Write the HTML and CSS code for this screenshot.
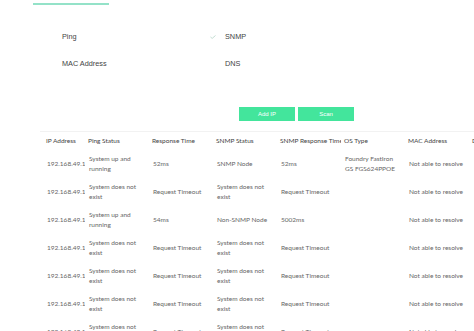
FILE: index.html
```html
<!DOCTYPE html>
<html lang="en">
<head>
  <meta charset="UTF-8">
  <meta name="viewport" content="width=device-width, initial-scale=1.0">
  <title>Network Scan</title>
  <link rel="stylesheet" href="styles.css">
</head>
<body>
  <div class="page">
    <div class="tab-line"></div>

    <!-- Scan Options -->
    <div class="options">
      <div class="option">Ping</div>
      <div class="option"><span class="check">
        <svg width="6" height="4" viewBox="0 0 6 4"><path d="M0.5 2 L2.2 3.4 L5.5 0.5" fill="none" stroke="#bcd9cd" stroke-width="0.9"/></svg>
      </span>SNMP</div>
      <div class="option">MAC Address</div>
      <div class="option"><span class="check"></span>DNS</div>
    </div>

    <!-- Actions -->
    <div class="actions">
      <button class="btn">Add IP</button>
      <button class="btn">Scan</button>
    </div>

    <!-- Results -->
    <div class="results">
      <div class="row head">
        <div class="cell">IP Address</div>
        <div class="cell">Ping Status</div>
        <div class="cell">Response Time</div>
        <div class="cell">SNMP Status</div>
        <div class="cell">SNMP Response Time</div>
        <div class="cell">OS Type</div>
        <div class="cell">MAC Address</div>
        <div class="cell">DNS Name</div>
      </div>
      <div class="row">
        <div class="cell ip">192.168.49.101</div>
        <div class="cell">System up and running</div>
        <div class="cell">52ms</div>
        <div class="cell">SNMP Node</div>
        <div class="cell">52ms</div>
        <div class="cell">Foundry FastIron GS FGS624PPOE</div>
        <div class="cell">Not able to resolve</div>
        <div class="cell"></div>
      </div>
      <div class="row">
        <div class="cell ip">192.168.49.102</div>
        <div class="cell">System does not exist</div>
        <div class="cell">Request Timeout</div>
        <div class="cell">System does not exist</div>
        <div class="cell">Request Timeout</div>
        <div class="cell"></div>
        <div class="cell">Not able to resolve</div>
        <div class="cell"></div>
      </div>
      <div class="row">
        <div class="cell ip">192.168.49.103</div>
        <div class="cell">System up and running</div>
        <div class="cell">54ms</div>
        <div class="cell">Non-SNMP Node</div>
        <div class="cell">5002ms</div>
        <div class="cell"></div>
        <div class="cell">Not able to resolve</div>
        <div class="cell"></div>
      </div>
      <div class="row">
        <div class="cell ip">192.168.49.104</div>
        <div class="cell">System does not exist</div>
        <div class="cell">Request Timeout</div>
        <div class="cell">System does not exist</div>
        <div class="cell">Request Timeout</div>
        <div class="cell"></div>
        <div class="cell">Not able to resolve</div>
        <div class="cell"></div>
      </div>
      <div class="row">
        <div class="cell ip">192.168.49.105</div>
        <div class="cell">System does not exist</div>
        <div class="cell">Request Timeout</div>
        <div class="cell">System does not exist</div>
        <div class="cell">Request Timeout</div>
        <div class="cell"></div>
        <div class="cell">Not able to resolve</div>
        <div class="cell"></div>
      </div>
      <div class="row">
        <div class="cell ip">192.168.49.106</div>
        <div class="cell">System does not exist</div>
        <div class="cell">Request Timeout</div>
        <div class="cell">System does not exist</div>
        <div class="cell">Request Timeout</div>
        <div class="cell"></div>
        <div class="cell">Not able to resolve</div>
        <div class="cell"></div>
      </div>
      <div class="row">
        <div class="cell ip">192.168.49.107</div>
        <div class="cell">System does not exist</div>
        <div class="cell">Request Timeout</div>
        <div class="cell">System does not exist</div>
        <div class="cell">Request Timeout</div>
        <div class="cell"></div>
        <div class="cell">Not able to resolve</div>
        <div class="cell"></div>
      </div>
    </div>
  </div>
</body>
</html>
```

FILE: styles.css
```css
body {
  margin: 0;
  font-family: "Liberation Sans", Arial, sans-serif;
  background-color: #ffffff;
  color: #444444;
  overflow: hidden;
}
.page {
  width: 474px;
  height: 331px;
  overflow: hidden;
}
.tab-line {
  width: 76px;
  height: 2px;
  margin: 3px 0 0 33px;
  background-color: #94e2c8;
}
.options {
  display: grid;
  grid-template-columns: 148px 1fr;
  grid-auto-rows: 27px;
  margin-top: 18px;
  padding-left: 62px;
  font-size: 7.3px;
}
.option {
  display: flex;
  align-items: center;
}
.check {
  display: inline-flex;
  width: 6px;
  margin-right: 9px;
}
.actions {
  display: flex;
  gap: 3px;
  margin: 30px 0 0 239px;
}
.btn {
  width: 56px;
  height: 14px;
  padding: 0;
  border: none;
  background-color: #43e59c;
  color: #ffffff;
  font-family: "Liberation Sans", Arial, sans-serif;
  font-size: 6px;
  cursor: pointer;
}
.results {
  margin: 10px 0 0 40px;
  padding-left: 3px;
  border-top: 1px solid #f2f2f2;
  font-family: Lato, sans-serif;
  font-size: 6.5px;
  line-height: 10px;
  color: #666666;
}
.row {
  display: grid;
  grid-template-columns: 42px repeat(7, 64px);
  height: 28px;
  align-items: center;
}
.row.head {
  height: 18px;
  color: #444444;
}
.cell {
  padding: 0 4px 0 4px;
  overflow: hidden;
}
.head .cell, .cell.ip {
  white-space: nowrap;
}
.head .cell {
  padding-left: 3px;
}
.cell.ip {
  padding-right: 0;
}
```
